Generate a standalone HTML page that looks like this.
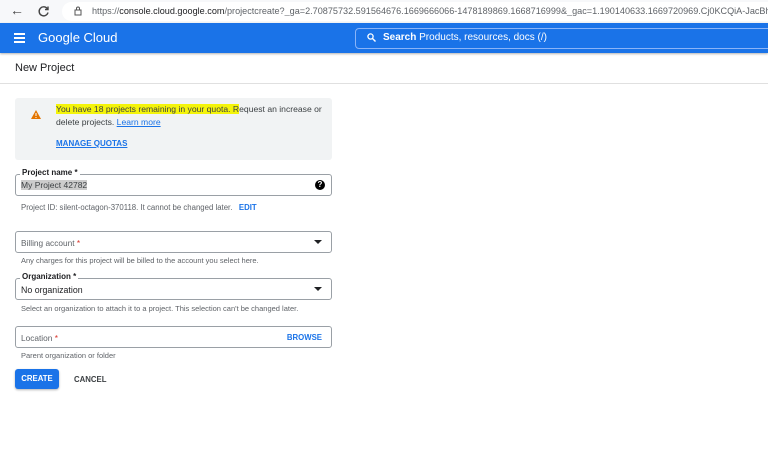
<!DOCTYPE html>
<html><head><style>
*{margin:0;padding:0;box-sizing:border-box}
body{width:768px;height:456px;background:#fff;font-family:"Liberation Sans",Arial,sans-serif;position:relative;overflow:hidden;color:#202124}
.a{position:absolute}
.field{position:absolute;left:15px;width:317px;height:22px;border:1px solid #9aa0a6;border-radius:3px}
.lbl{position:absolute;left:4px;top:-7px;background:#fff;padding:0 2px;font-size:8px;color:#202124;font-weight:bold}
.help{position:absolute;left:21px;font-size:7.5px;color:#5f6368;white-space:nowrap}
.arrow{position:absolute;right:9px;top:8px;width:0;height:0;border-left:4px solid transparent;border-right:4px solid transparent;border-top:4px solid #202124}
</style></head><body>
<div class="a" style="left:0;top:0;width:768px;height:23px;background:#f7f8fa"></div>
<div class="a" style="left:10px;top:2px;font-size:14px;color:#444">&#8592;</div>
<svg class="a" style="left:37px;top:5px" width="13" height="13" viewBox="0 0 13 13"><path d="M10.5 4A4.5 4.5 0 1 0 11 7.5" fill="none" stroke="#444" stroke-width="1.4"/><path d="M11 1.5V4.5H8" fill="none" stroke="#444" stroke-width="1.4"/></svg>
<div class="a" style="left:62px;top:2px;width:706px;height:19px;background:#fff;border-radius:10px 0 0 10px"></div>
<svg class="a" style="left:74px;top:6px" width="8" height="10" viewBox="0 0 8 10"><rect x="1" y="4" width="6" height="5" fill="none" stroke="#555"/><path d="M2.5 4V2.5a1.5 1.5 0 0 1 3 0V4" fill="none" stroke="#555"/></svg>
<div class="a" style="left:92px;top:6px;width:676px;overflow:hidden;font-size:9.1px;color:#5f6368;white-space:nowrap">https://<span style="color:#202124">console.cloud.google.com</span>/projectcreate?_ga=2.70875732.591564676.1669666066-1478189869.1668716999&amp;_gac=1.190140633.1669720969.Cj0KCQiA-JacBhC0ARIsAIxyb</div>
<div class="a" style="left:0;top:23px;width:768px;height:30px;background:#1a73e8;box-shadow:0 1px 2px rgba(0,0,0,.3)"></div>
<div class="a" style="left:14px;top:33px;width:11px;height:2px;background:#fff;box-shadow:0 4px 0 #fff,0 8px 0 #fff"></div>
<div class="a" style="left:38px;top:30px;font-size:13px;color:#fff">Google Cloud</div>
<div class="a" style="left:355px;top:28px;width:420px;height:21px;border:1px solid #8ab4f8;border-radius:4px;background:#1a73e8"></div>
<svg class="a" style="left:367px;top:33px" width="9" height="9" viewBox="0 0 9 9"><circle cx="3.5" cy="3.5" r="2.6" fill="none" stroke="#fff" stroke-width="1.3"/><path d="M5.5 5.5L8.5 8.5" stroke="#fff" stroke-width="1.4"/></svg>
<div class="a" style="left:383px;top:32px;font-size:10px;color:#fff;white-space:nowrap"><b>Search</b>&nbsp;Products, resources, docs (/)</div>
<div class="a" style="left:15px;top:62px;font-size:11px;color:#202124">New Project</div>
<div class="a" style="left:0;top:83px;width:768px;height:1px;background:#e0e0e0"></div>
<div class="a" style="left:15px;top:98px;width:317px;height:62px;background:#f1f3f4;border-radius:3px"></div>
<svg class="a" style="left:31px;top:110px" width="10" height="9" viewBox="0 0 10 9"><path d="M5 0L10 9H0Z" fill="#e37400"/><rect x="4.5" y="3" width="1" height="3" fill="#fff"/><rect x="4.5" y="7" width="1" height="1" fill="#fff"/></svg>
<div class="a" style="left:56px;top:103px;font-size:8.6px;line-height:13px;color:#3c4043;width:275px"><span style="background:#f4f40a">You have 18 projects remaining in your quota. R</span>equest an increase or delete projects. <span style="color:#1a73e8;text-decoration:underline">Learn more</span></div>
<div class="a" style="left:56px;top:139px;font-size:8px;font-weight:bold;color:#1a73e8;text-decoration:underline">MANAGE QUOTAS</div>
<div class="field" style="top:174px"><span class="lbl">Project name *</span><span class="a" style="left:5px;top:5px;font-size:8.5px;color:#3c4043;background:#ccc">My Project 42782</span><span class="a" style="right:6px;top:5px;width:10px;height:10px;border-radius:50%;background:#000;color:#fff;font-size:8px;font-weight:bold;text-align:center;line-height:10px">?</span></div>
<div class="help" style="top:203px;font-size:7.8px">Project ID: silent-octagon-370118. It cannot be changed later. &nbsp;&nbsp;<b style="color:#1a73e8">EDIT</b></div>
<div class="field" style="top:231px"><span class="a" style="left:5px;top:6px;font-size:8.3px;color:#5f6368">Billing account <span style="color:#d93025">*</span></span><span class="arrow"></span></div>
<div class="help" style="top:256px">Any charges for this project will be billed to the account you select here.</div>
<div class="field" style="top:278px"><span class="lbl">Organization *</span><span class="a" style="left:5px;top:6px;font-size:8.8px;color:#202124">No organization</span><span class="arrow"></span></div>
<div class="help" style="top:304px">Select an organization to attach it to a project. This selection can't be changed later.</div>
<div class="field" style="top:326px"><span class="a" style="left:5px;top:6px;font-size:8.3px;color:#5f6368">Location <span style="color:#d93025">*</span></span><span class="a" style="right:9px;top:6px;font-size:7.8px;font-weight:bold;color:#1a73e8">BROWSE</span></div>
<div class="help" style="top:351px">Parent organization or folder</div>
<div class="a" style="left:15px;top:369px;width:44px;height:20px;background:#1a73e8;border-radius:3px;color:#fff;font-size:7.8px;font-weight:bold;text-align:center;line-height:20px;box-shadow:0 1px 2px rgba(0,0,0,.3)">CREATE</div>
<div class="a" style="left:74px;top:375px;font-size:7.8px;font-weight:bold;color:#3c4043">CANCEL</div>
</body></html>
